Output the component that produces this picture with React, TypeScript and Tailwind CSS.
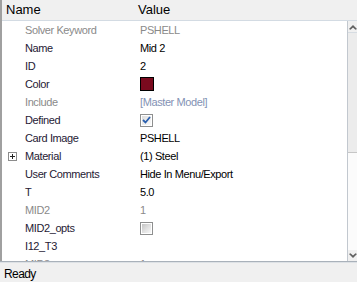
import React from "react";

type Row = {
  label: string;
  labelGray?: boolean;
  value?: React.ReactNode;
  expand?: boolean;
};

const Swatch = () => (
  <div className="w-[14px] h-[14px] border border-black bg-[#7a0a1e]" />
);

const Check = ({ checked }: { checked: boolean }) => (
  <div className="w-[13px] h-[13px] border border-[#8e8f8f] p-[1px] bg-white">
    <div
      className={
        checked
          ? "w-full h-full bg-gradient-to-br from-[#dcdcdc] to-[#fbfbfb] flex items-center justify-center"
          : "w-full h-full bg-gradient-to-br from-[#c4c4c4] via-[#e0e0e0] to-[#f8f8f8]"
      }
    >
      {checked && (
        <svg width="9" height="8" viewBox="0 0 9 8">
          <path d="M1 4 L3.5 6.5 L8 1" fill="none" stroke="#2a5fae" strokeWidth="1.8" />
        </svg>
      )}
    </div>
  </div>
);

const PlusBox = () => (
  <div className="w-[9px] h-[9px] border border-[#8c8c8c] bg-white flex items-center justify-center relative">
    <div className="absolute w-[5px] h-[1px] bg-[#222]" />
    <div className="absolute w-[1px] h-[5px] bg-[#222]" />
  </div>
);

const gray = "text-[#8a8a8a]";

const rows: Row[] = [
  { label: "Solver Keyword", labelGray: true, value: <span className={gray}>PSHELL</span> },
  { label: "Name", value: "Mid 2" },
  { label: "ID", value: "2" },
  { label: "Color", value: <Swatch /> },
  { label: "Include", labelGray: true, value: <span className="text-[#8392b4]">[Master Model]</span> },
  { label: "Defined", value: <Check checked /> },
  { label: "Card Image", value: "PSHELL" },
  { label: "Material", expand: true, value: "(1) Steel" },
  { label: "User Comments", value: "Hide In Menu/Export" },
  { label: "T", value: "5.0" },
  { label: "MID2", labelGray: true, value: <span className={gray}>1</span> },
  { label: "MID2_opts", value: <Check checked={false} /> },
  { label: "I12_T3" },
  { label: "MID3", labelGray: true, value: <span className={gray}>1</span> },
];

export default function App() {
  return (
    <div
      className="w-[357px] h-[282px] bg-[#f0f0f0] flex flex-col overflow-hidden"
      style={{ fontFamily: '"Liberation Sans", Arial, sans-serif' }}
    >
      <div className="h-[261px] flex flex-col border-l-2 border-[#a0a0a0] shrink-0">
        <div className="h-[21px] shrink-0 flex items-center border-b border-[#d3dbe3] text-[13px] text-black">
          <div className="w-[136px] pl-[4px]">Name</div>
          <div>Value</div>
        </div>
        <div className="flex-1 flex min-h-0">
          <div className="flex-1 bg-white overflow-hidden text-[11px] tracking-[-0.4px]">
            {rows.map((r) => (
              <div key={r.label} className="h-[18px] flex items-center">
                <div className="w-[138px] pl-[6px] flex items-center shrink-0">
                  <div className="w-[17px] shrink-0 flex items-center">
                    {r.expand && <PlusBox />}
                  </div>
                  <span className={r.labelGray ? gray : "text-[#262034]"}>{r.label}</span>
                </div>
                <div className="flex items-center text-black">{r.value}</div>
              </div>
            ))}
          </div>
          <div className="w-[10px] shrink-0 flex flex-col border-l border-[#c2c8cf]">
            <div className="h-[12px] shrink-0 bg-[#f0f0f0] border-b border-[#d6dce2] flex items-center pl-[1px]">
              <svg width="8" height="6" viewBox="0 0 8 6">
                <path d="M0 5 L4 1 L8 5 L6.5 5.8 L4 3.4 L1.5 5.8 Z" fill="#606060" />
              </svg>
            </div>
            <div className="h-[120px] shrink-0 bg-[#ececec] border-b border-[#c6c6c6]" />
            <div className="flex-1 bg-[#fbfbfb]" />
            <div className="h-[11px] shrink-0 bg-[#f0f0f0] flex items-center pl-[1px]">
              <svg width="8" height="6" viewBox="0 0 8 6">
                <path d="M0 1 L4 5 L8 1 L6.5 0.2 L4 2.6 L1.5 0.2 Z" fill="#606060" />
              </svg>
            </div>
          </div>
        </div>
      </div>
      <div className="h-[1px] bg-[#a9b1ba] shrink-0" />
      <div className="h-[1px] bg-[#dde1e5] shrink-0" />
      <div className="flex-1 flex items-center pl-[4px] pt-[2px] leading-[14px] text-[12px] tracking-[-0.6px] text-black">
        Ready
      </div>
    </div>
  );
}
